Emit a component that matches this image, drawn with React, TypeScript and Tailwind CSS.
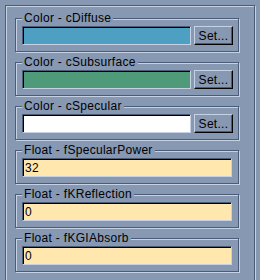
type Prop =
  | { kind: 'color'; label: string; swatch: string }
  | { kind: 'float'; label: string; value: string };

const PROPS: Prop[] = [
  { kind: 'color', label: 'Color - cDiffuse', swatch: 'bg-[#4ea0c2]' },
  { kind: 'color', label: 'Color - cSubsurface', swatch: 'bg-[#4f9a78]' },
  { kind: 'color', label: 'Color - cSpecular', swatch: 'bg-white' },
  { kind: 'float', label: 'Float - fSpecularPower', value: '32' },
  { kind: 'float', label: 'Float - fKReflection', value: '0' },
  { kind: 'float', label: 'Float - fKGIAbsorb', value: '0' },
];

function Group({ prop }: { prop: Prop }) {
  return (
    <div className="relative w-[224px] h-[34px] border border-[#4d5c76] shadow-[inset_1px_1px_0_#c6d2e3,1px_1px_0_#c6d2e3] pl-[6px] pt-[7px]">
      <span className="absolute left-[6px] top-[-7px] px-[2px] bg-[#8798b3] leading-[13px] text-black">
        {prop.label}
      </span>
      {prop.kind === 'color' ? (
        <div className="flex gap-[3px]">
          {/* swatch */}
          <div
            className={`w-[169px] h-[19px] border border-t-[#4d5c76] border-l-[#4d5c76] border-b-[#c6d2e3] border-r-[#c6d2e3] shadow-[inset_1px_1px_0_#000] ${prop.swatch}`}
          />
          <button className="w-[39px] h-[19px] flex items-center justify-center border border-t-[#c6d2e3] border-l-[#c6d2e3] border-b-black border-r-black shadow-[inset_-1px_-1px_0_#4d5c76] bg-[#8798b3] text-black leading-none">
            Set...
          </button>
        </div>
      ) : (
        <div className="w-[210px] h-[19px] flex items-center pl-[2px] border border-t-[#4d5c76] border-l-[#4d5c76] border-b-[#c6d2e3] border-r-[#c6d2e3] shadow-[inset_1px_1px_0_#000] bg-[#ffe7ad] text-black">
          {prop.value}
        </div>
      )}
    </div>
  );
}

export default function App() {
  return (
    <div className="w-[260px] h-[280px] overflow-hidden bg-[#8798b3] pt-[5px] pl-[5px] text-[12px] tracking-[0.3px] font-['Liberation_Sans',Arial,sans-serif]">
      <div className="w-[250px] h-[300px] border border-[#4d5c76] shadow-[inset_1px_1px_0_#c6d2e3,1px_1px_0_#c6d2e3] pl-[9px] pt-[12px] flex flex-col gap-[10px]">
        {PROPS.map((p) => (
          <Group key={p.label} prop={p} />
        ))}
      </div>
    </div>
  );
}
